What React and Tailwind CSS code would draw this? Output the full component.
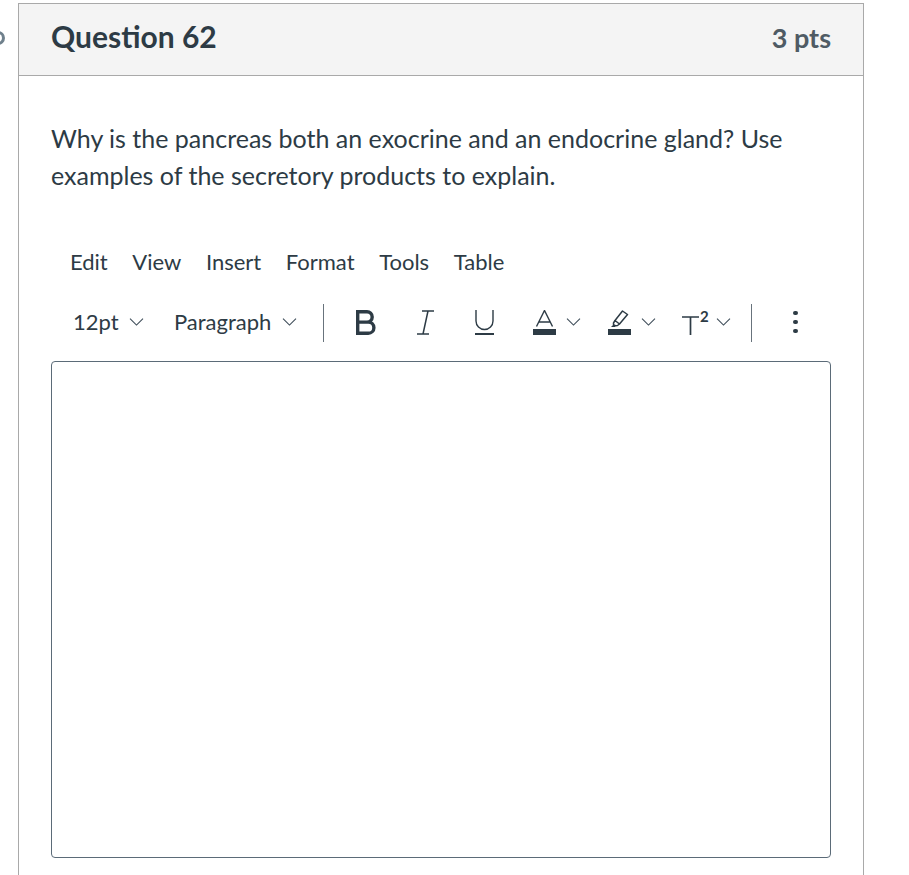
const MENUS = [
  ['Edit', 'ml-[19px]'],
  ['View', 'ml-[24.6px]'],
  ['Insert', 'ml-[24.6px]'],
  ['Format', 'ml-[24.6px]'],
  ['Tools', 'ml-[24.6px]'],
  ['Table', 'ml-[24.6px]'],
]

function Chevron({ className }) {
  return (
    <svg viewBox="0 0 16 9" className={`w-[15px] h-[8px] mb-[2px] shrink-0 ${className}`} fill="none" stroke="#3d4c58" strokeWidth="1.2">
      <path d="M.7.7L8 8l7.3-7.3" />
    </svg>
  )
}

function Separator({ className }) {
  return <div className={`w-px h-[38px] bg-[#68737c] shrink-0 ${className}`} />
}

function Toolbar() {
  return (
    <div className="flex items-center h-[38px] mt-[28px] text-[#2d3b45] text-[22px]">
      <span className="ml-[22px] w-[44px] mb-[4px]">12pt</span>
      <Chevron className="ml-[12px]" />
      <span className="ml-[30px] w-[97px] mb-[4px] whitespace-nowrap">Paragraph</span>
      <Chevron className="ml-[11px]" />
      <Separator className="ml-[26px]" />
      {/* bold */}
      <svg viewBox="0 0 20 25" className="w-[20px] h-[25px] mb-[1px] ml-[32px]" fill="none" stroke="#2d3b45" strokeWidth="3.4">
        <path d="M1.700 1.700h9.300a5.200 5.200 0 0 1 0 10.400H1.700zM1.700 12.100h10.600a5.600 5.600 0 0 1 0 11.200H1.700z" />
      </svg>
      {/* italic */}
      <svg viewBox="0 0 17 25" className="w-[17px] h-[25px] mb-[1px] ml-[41px]" fill="none" stroke="#2d3b45" strokeWidth="1.5">
        <path d="M5 1h12M0 24h12M11 1L6 24" />
      </svg>
      {/* underline */}
      <svg viewBox="0 0 19 25" className="w-[19px] h-[25px] mb-[1px] ml-[41px]" fill="none" stroke="#2d3b45">
        <path d="M1 0v11a8.500 8.500 0 0 0 17 0V0" strokeWidth="1.4" />
        <path d="M0 24h19" strokeWidth="2" />
      </svg>
      {/* text colour */}
      <svg viewBox="0 0 23 25" className="w-[23px] h-[25px] mb-[1px] ml-[39px]" fill="none">
        <path d="M3.500 16.500L11.500 0.500 19.500 16.500M6 12h11" stroke="#2d3b45" strokeWidth="1.4" />
        <path d="M0 19h23v6H0z" fill="#2d3b45" />
      </svg>
      <Chevron className="ml-[10px]" />
      {/* highlight */}
      <svg viewBox="0 0 23 25" className="w-[23px] h-[25px] mb-[1px] ml-[27px]" fill="none">
        <path d="M14.500 1L19.500 4.500 11.500 14 7 10.500zM7 10.500L5.500 13 5.500 14.500 7.500 15.800 9.500 15.500 11.500 14" stroke="#2d3b45" strokeWidth="1.5" strokeLinejoin="round" />
        <path d="M5.500 14.500L3 17 7 17 7.500 15.800z" fill="#2d3b45" />
        <path d="M0 19h23v6H0z" fill="#2d3b45" />
      </svg>
      <Chevron className="ml-[10px]" />
      {/* superscript */}
      <div className="relative w-[25px] h-[25px] mb-[1px] ml-[26px] shrink-0">
        <svg viewBox="0 0 25 25" className="w-[25px] h-[25px]" fill="none" stroke="#2d3b45" strokeWidth="1.7">
          <path d="M0 7h17M8.500 7v18" />
        </svg>
        <span className="absolute left-[18px] top-[-1px] text-[15px] font-bold leading-[14px]">2</span>
      </div>
      <Chevron className="ml-[9px]" />
      <Separator className="ml-[20px]" />
      <div className="flex flex-col gap-[4.500px] ml-[41px] mb-[2px]">
        <div className="w-[4.500px] h-[4.500px] rounded-full bg-[#2d3b45]" />
        <div className="w-[4.500px] h-[4.500px] rounded-full bg-[#2d3b45]" />
        <div className="w-[4.500px] h-[4.500px] rounded-full bg-[#2d3b45]" />
      </div>
    </div>
  )
}

export default function App() {
  return (
    <div className="relative w-[909px] h-[875px] overflow-hidden bg-white font-['Lato','Carlito',sans-serif] text-[#2d3b45]">
      <div className="absolute left-[-9px] top-[31px] w-[14px] h-[14px] rounded-full border-[3px] border-[#6f808c]" />
      <div className="w-[846px] h-[880px] mt-[3px] ml-[18px] border-x border-t border-[#a9a9a9] relative">
        <div className="flex items-center justify-between h-[72px] px-[32px] pb-[4px] bg-[#f4f4f4] border-b border-[#a9a9a9]">
          <h2 className="text-[30px] font-bold mb-[2px]">Question 62</h2>
          <span className="text-[27px] font-bold text-[#4f5b64] mt-[2px]">3 pts</span>
        </div>
        <div className="pt-[44px] px-[32px]">
          <p className="text-[25px] leading-[37px]">
            Why is the pancreas both an exocrine and an endocrine gland? Use
            <br />
            examples of the secretory products to explain.
          </p>
          <div className="flex items-center mt-[52px] text-[22px] h-[30px]">
            {MENUS.map(([label, margin]) => (
              <span key={label} className={margin}>{label}</span>
            ))}
          </div>
          <Toolbar />
          <div className="w-[780px] h-[497px] mt-[19px] border border-[#5b6b78] rounded-[4px]" />
        </div>
      </div>
    </div>
  )
}
